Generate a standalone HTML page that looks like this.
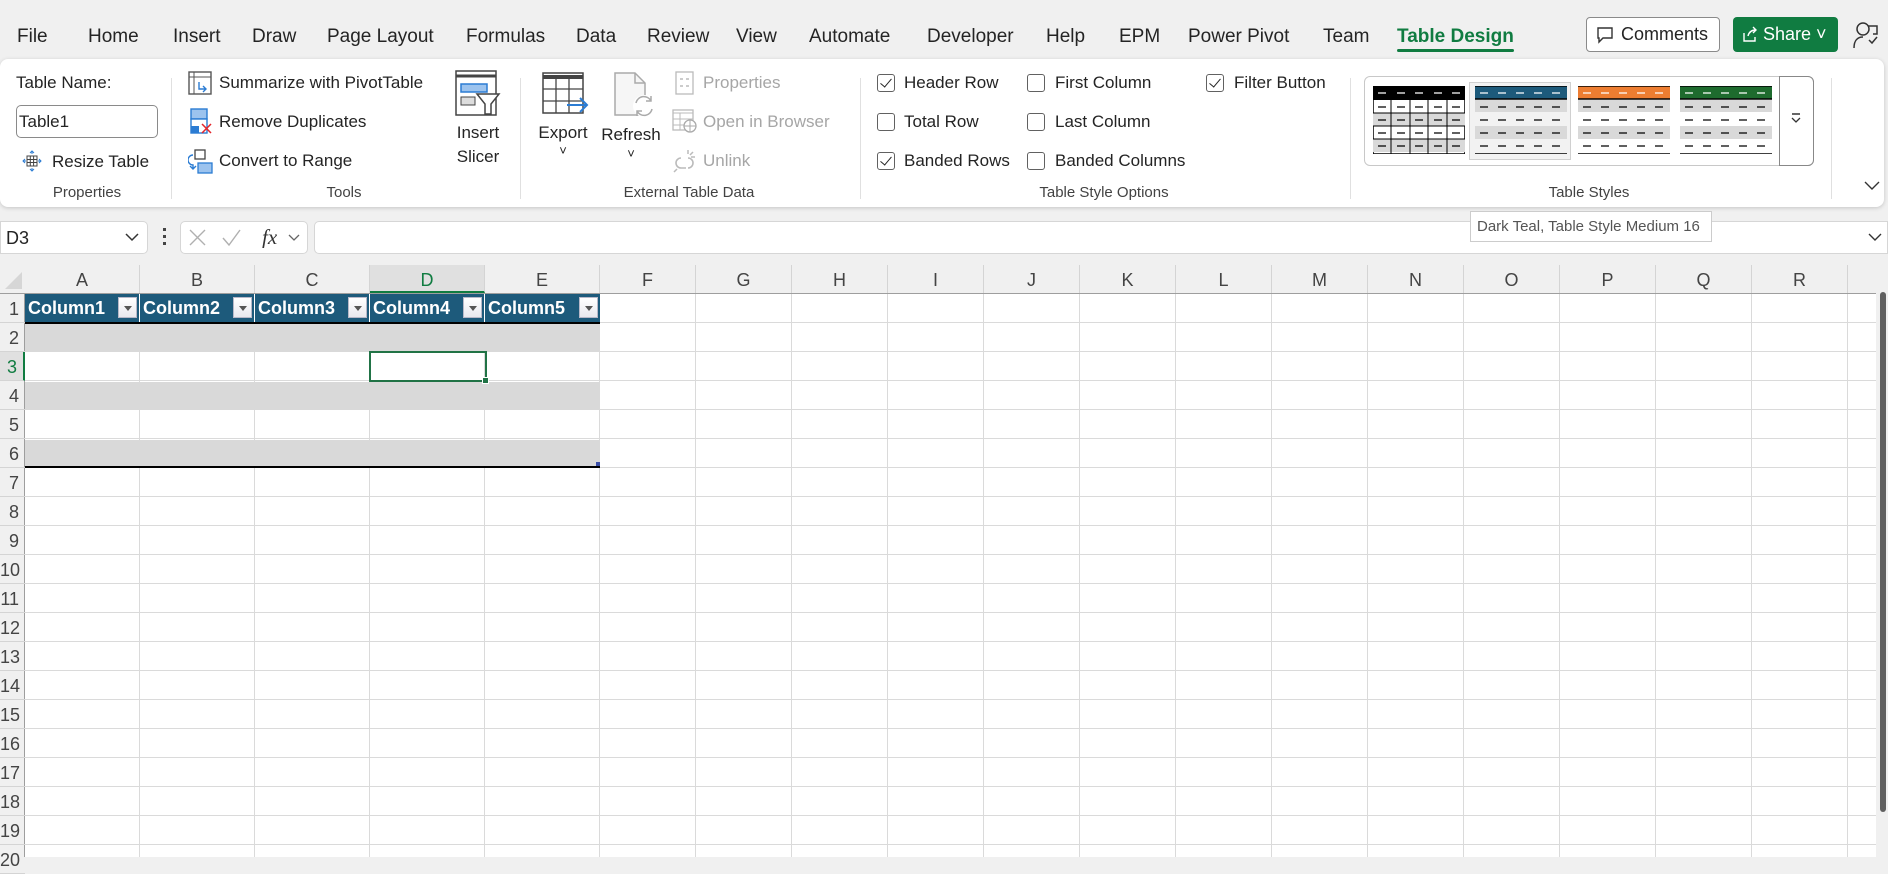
<!DOCTYPE html>
<html><head><meta charset="utf-8"><style>
*{margin:0;padding:0;box-sizing:border-box}
body{width:1888px;height:857px;overflow:hidden;background:#f0f0f0;font-family:"Liberation Sans",sans-serif;color:#242424;position:relative}
.a{position:absolute;white-space:nowrap}
.tab{position:absolute;top:26px;font-size:19px;color:#242424}
.t{position:absolute;font-size:17px;color:#242424;white-space:nowrap}
.g{color:#a6a6a6}
.lbl{position:absolute;top:184px;font-size:15px;color:#424242;transform:translateX(-50%);white-space:nowrap}
.sep{position:absolute;top:78px;width:1px;height:121px;background:#e0e0e0}
.cb{position:absolute;width:18px;height:18px;border:1.5px solid #616161;border-radius:3px;background:#fff}
.cb.on::after{content:"";position:absolute;left:5px;top:1px;width:5px;height:10px;border:solid #242424;border-width:0 1.5px 1.5px 0;transform:rotate(40deg)}
.ch{position:absolute;top:265px;height:28px;font-size:18px;color:#444;text-align:center;line-height:30px;border-right:1px solid #d4d4d4}
.rh{position:absolute;left:0;width:25px;height:29px;font-size:18px;color:#444;text-align:right;line-height:31px;padding-right:6px;border-bottom:1px solid #d4d4d4;overflow:hidden}
.hc{position:absolute;top:294px;height:28px;background:#1d5a7b;color:#fff;font-weight:bold;font-size:18px;line-height:29px;padding-left:3px;border-right:1px solid #fff}
.fb{position:absolute;right:2px;top:3px;width:19px;height:21px;background:linear-gradient(#fff,#e8e8ee);border:1px solid #b8b8c8}
.fb::after{content:"";position:absolute;left:5px;top:8px;border-left:4px solid transparent;border-right:4px solid transparent;border-top:5px solid #555}
.thumb{position:absolute;top:86px;width:92px;height:68px}
</style></head><body>

<div class="tab" style="left:17px">File</div>
<div class="tab" style="left:88px">Home</div>
<div class="tab" style="left:173px">Insert</div>
<div class="tab" style="left:252px">Draw</div>
<div class="tab" style="left:327px">Page Layout</div>
<div class="tab" style="left:466px">Formulas</div>
<div class="tab" style="left:576px">Data</div>
<div class="tab" style="left:647px">Review</div>
<div class="tab" style="left:736px">View</div>
<div class="tab" style="left:809px">Automate</div>
<div class="tab" style="left:927px">Developer</div>
<div class="tab" style="left:1046px">Help</div>
<div class="tab" style="left:1119px">EPM</div>
<div class="tab" style="left:1188px">Power Pivot</div>
<div class="tab" style="left:1323px">Team</div>
<div class="tab" style="left:1397px;color:#107c41;font-weight:bold;font-size:19px">Table Design</div>
<div class="a" style="left:1397px;top:49px;width:117px;height:3px;background:#107c41;border-radius:2px"></div>

<div class="a" style="left:1586px;top:17px;width:134px;height:35px;border:1px solid #8a8a8a;border-radius:4px;background:#fff;font-size:18px;line-height:33px;padding-left:34px">Comments</div>
<svg class="a" style="left:1596px;top:26px" width="18" height="18" viewBox="0 0 18 18"><path d="M2 2h14v10H7l-4 4v-4H2z" fill="none" stroke="#333" stroke-width="1.4"/></svg>
<div class="a" style="left:1733px;top:17px;width:105px;height:35px;border-radius:4px;background:#107c41;color:#fff;font-size:18px;line-height:35px;padding-left:30px">Share ˅</div>
<svg class="a" style="left:1741px;top:25px" width="18" height="18" viewBox="0 0 18 18"><path d="M3 8v8h11v-4M7 11c1-4 4-6 8-6M12 2l3 3-3 3" fill="none" stroke="#fff" stroke-width="1.4"/></svg>
<svg class="a" style="left:1852px;top:20px" width="28" height="30" viewBox="0 0 28 30"><circle cx="11" cy="9" r="6" fill="none" stroke="#333" stroke-width="1.5"/><path d="M2 28c0-8 4-11 9-11M16 6h9v8h-4" fill="none" stroke="#333" stroke-width="1.5"/><path d="M17 20l3 3 5-6" fill="none" stroke="#333" stroke-width="1.5"/></svg>

<div class="a" style="left:0;top:59px;width:1884px;height:148px;background:#fff;border-radius:8px;box-shadow:0 1px 4px rgba(0,0,0,.18)"></div>

<div class="t" style="left:16px;top:73px">Table Name:</div>
<div class="a" style="left:16px;top:105px;width:142px;height:33px;border:1px solid #8a8a8a;border-radius:5px;font-size:17px;line-height:31px;padding-left:2px">Table1</div>
<svg class="a" style="left:22px;top:150px" width="20" height="22" viewBox="0 0 20 22"><rect x="5" y="6" width="10" height="10" fill="none" stroke="#444"/><path d="M5 9.5h10M5 12.5h10M8.3 6v10M11.6 6v10" stroke="#444"/><path d="M10 1v3M8 3l2-2 2 2M10 21v-3M8 19l2 2 2-2M1 11h3M3 9l-2 2 2 2M19 11h-3M17 9l2 2-2 2" stroke="#2b7cd3" fill="none"/></svg>
<div class="t" style="left:52px;top:152px">Resize Table</div>
<div class="lbl" style="left:87px">Properties</div>
<div class="sep" style="left:171px"></div>

<svg class="a" style="left:188px;top:71px" width="24" height="24" viewBox="0 0 24 24"><rect x="1" y="1" width="22" height="22" fill="#fff" stroke="#555" stroke-width="1.4"/><path d="M1 6h22M6 1v22" stroke="#555"/><path d="M11 11v7h7M15 15l3 3-3 3" stroke="#2b7cd3" fill="none" stroke-width="1.4"/></svg>
<div class="t" style="left:219px;top:73px">Summarize with PivotTable</div>
<svg class="a" style="left:190px;top:108px" width="24" height="27" viewBox="0 0 24 27"><rect x="1" y="1" width="16" height="10" fill="#9cc3ee" stroke="#2b7cd3" stroke-width="1.4"/><rect x="1" y="11" width="16" height="14" fill="#fff" stroke="#2b7cd3" stroke-width="1.4"/><rect x="1" y="18" width="8" height="7" fill="#2b7cd3"/><path d="M12 16l9 9M21 16l-9 9" stroke="#e3262c" stroke-width="1.5"/></svg>
<div class="t" style="left:219px;top:112px">Remove Duplicates</div>
<svg class="a" style="left:188px;top:149px" width="26" height="26" viewBox="0 0 26 26"><rect x="7" y="1" width="10" height="9" fill="#fff" stroke="#444" stroke-width="1.3"/><rect x="10" y="14" width="14" height="10" fill="#9cc3ee" stroke="#2b7cd3" stroke-width="1.3"/><path d="M5 6a5 5 0 0 0 0 10v4M2 17l3 3 3-3" stroke="#2b7cd3" fill="none" stroke-width="1.4"/></svg>
<div class="t" style="left:219px;top:151px">Convert to Range</div>

<svg class="a" style="left:455px;top:70px" width="46" height="48" viewBox="0 0 46 48"><rect x="1" y="1" width="40" height="44" fill="#fff" stroke="#444" stroke-width="1.5"/><path d="M1 6h40" stroke="#444" stroke-width="3"/><rect x="6" y="14" width="26" height="8" fill="#9cc3ee" stroke="#2b7cd3" stroke-width="1.5"/><rect x="6" y="27" width="14" height="8" fill="#ddd" stroke="#444"/><path d="M22 24h22l-8 10v10h-6V34z" fill="#fff" stroke="#444" stroke-width="1.5"/></svg>
<div class="t" style="left:478px;top:123px;transform:translateX(-50%)">Insert</div>
<div class="t" style="left:478px;top:147px;transform:translateX(-50%)">Slicer</div>
<div class="lbl" style="left:344px">Tools</div>
<div class="sep" style="left:520px"></div>

<svg class="a" style="left:542px;top:72px" width="48" height="46" viewBox="0 0 48 46"><rect x="1" y="1" width="40" height="40" fill="#fff" stroke="#444" stroke-width="1.5"/><path d="M1 5h40" stroke="#444" stroke-width="4"/><path d="M1 17h40M1 29h40M14 5v36M27 5v36" stroke="#444" stroke-width="1.3"/><path d="M25 33h20M38 26l7 7-7 7" stroke="#2b7cd3" stroke-width="2" fill="none"/></svg>
<div class="t" style="left:563px;top:123px;transform:translateX(-50%)">Export</div>
<div class="t" style="left:563px;top:143px;transform:translateX(-50%);font-size:13px">˅</div>
<svg class="a" style="left:613px;top:72px" width="46" height="48" viewBox="0 0 46 48"><path d="M2 1h20l10 10v32H2z" fill="#f6f6f6" stroke="#aaa" stroke-width="1.5"/><path d="M22 1v10h10" fill="none" stroke="#aaa" stroke-width="1.5"/><circle cx="31" cy="34" r="11" fill="#fff"/><path d="M23 31a8 8 0 0 1 15-2M39 37a8 8 0 0 1-15 2M38 24v5h-5M24 44v-5h5" fill="none" stroke="#aaa" stroke-width="1.5"/></svg>
<div class="t" style="left:631px;top:125px;transform:translateX(-50%)">Refresh</div>
<div class="t" style="left:631px;top:146px;transform:translateX(-50%);font-size:13px">˅</div>

<svg class="a" style="left:675px;top:71px" width="20" height="24" viewBox="0 0 20 24"><rect x="1" y="1" width="17" height="22" fill="#fff" stroke="#bbb" stroke-width="1.3"/><path d="M5 8h3M5 15h3M11 8h3M11 15h3" stroke="#bbb" stroke-width="1.5"/></svg>
<div class="t g" style="left:703px;top:73px">Properties</div>
<svg class="a" style="left:672px;top:109px" width="26" height="24" viewBox="0 0 26 24"><rect x="1" y="1" width="20" height="20" fill="#fff" stroke="#bbb" stroke-width="1.3"/><path d="M1 4h20M1 10h20M1 16h20M8 4v17" stroke="#bbb"/><circle cx="18" cy="17" r="6" fill="#fff" stroke="#aaa" stroke-width="1.3"/><path d="M12 17h12M18 11v12" stroke="#aaa"/></svg>
<div class="t g" style="left:703px;top:112px">Open in Browser</div>
<svg class="a" style="left:672px;top:148px" width="26" height="26" viewBox="0 0 26 26"><path d="M9 10a5 5 0 1 0 0 10h5M16 10a5 5 0 1 1 0 10" fill="none" stroke="#bbb" stroke-width="1.6"/><path d="M16 2v4M21 4l-3 3M23 9h-4M5 21l-3 3" stroke="#bbb" stroke-width="1.5"/></svg>
<div class="t g" style="left:703px;top:151px">Unlink</div>
<div class="lbl" style="left:689px">External Table Data</div>
<div class="sep" style="left:860px"></div>

<div class="cb on" style="left:877px;top:74px"></div><div class="t" style="left:904px;top:73px">Header Row</div>
<div class="cb" style="left:877px;top:113px"></div><div class="t" style="left:904px;top:112px">Total Row</div>
<div class="cb on" style="left:877px;top:152px"></div><div class="t" style="left:904px;top:151px">Banded Rows</div>
<div class="cb" style="left:1027px;top:74px"></div><div class="t" style="left:1055px;top:73px">First Column</div>
<div class="cb" style="left:1027px;top:113px"></div><div class="t" style="left:1055px;top:112px">Last Column</div>
<div class="cb" style="left:1027px;top:152px"></div><div class="t" style="left:1055px;top:151px">Banded Columns</div>
<div class="cb on" style="left:1206px;top:74px"></div><div class="t" style="left:1234px;top:73px">Filter Button</div>
<div class="lbl" style="left:1104px">Table Style Options</div>
<div class="sep" style="left:1350px"></div>

<div class="a" style="left:1364px;top:76px;width:450px;height:90px;border:1px solid #c8c8c8;border-radius:6px;background:#fff"></div>
<div class="a" style="left:1469px;top:82px;width:102px;height:78px;background:#f2f2f2;border:1px solid #d0d0d0"></div>
<svg class="thumb" style="left:1373px" viewBox="0 0 92 68"><rect x="0" y="0" width="92" height="68" fill="#fff" stroke="#000" stroke-width="1.5"/><rect x="0" y="0" width="92" height="14" fill="#000"/><rect x="0" y="27" width="92" height="13" fill="#d9d9d9"/><rect x="0" y="53" width="92" height="13" fill="#d9d9d9"/><path d="M0 40h92M0 53h92M0 27h92M18 14v54M37 14v54M55 14v54M74 14v54" stroke="#000"/><path d="M5 7h8M24 7h8M42 7h8M61 7h8M79 7h8" stroke="#fff" stroke-width="1.3"/><path d="M5 21h8M24 21h8M42 21h8M61 21h8M79 21h8M5 34h8M24 34h8M42 34h8M61 34h8M79 34h8M5 47h8M24 47h8M42 47h8M61 47h8M79 47h8M5 60h8M24 60h8M42 60h8M61 60h8M79 60h8" stroke="#000" stroke-width="1.3"/></svg>
<svg class="thumb" style="left:1475px" viewBox="0 0 92 68"><rect x="0" y="0" width="92" height="13" fill="#1d5a7b"/><path d="M0 0h92M0 13h92M0 68h92" stroke="#000" stroke-width="1.5"/><rect x="0" y="14" width="92" height="12" fill="#d9d9d9"/><rect x="0" y="40" width="92" height="13" fill="#d9d9d9"/><path d="M5 7h8M23 7h8M41 7h8M59 7h8M77 7h8" stroke="#fff" stroke-width="1.3"/><path d="M5 21h8M23 21h8M41 21h8M59 21h8M77 21h8M5 34h8M23 34h8M41 34h8M59 34h8M77 34h8M5 47h8M23 47h8M41 47h8M59 47h8M77 47h8M5 60h8M23 60h8M41 60h8M59 60h8M77 60h8" stroke="#000" stroke-width="1.3"/></svg>
<svg class="thumb" style="left:1578px" viewBox="0 0 92 68"><rect x="0" y="0" width="92" height="13" fill="#ed7d31"/><path d="M0 0h92M0 13h92M0 68h92" stroke="#000" stroke-width="1.5"/><rect x="0" y="14" width="92" height="12" fill="#d9d9d9"/><rect x="0" y="40" width="92" height="13" fill="#d9d9d9"/><path d="M5 7h8M23 7h8M41 7h8M59 7h8M77 7h8" stroke="#fff" stroke-width="1.3"/><path d="M5 21h8M23 21h8M41 21h8M59 21h8M77 21h8M5 34h8M23 34h8M41 34h8M59 34h8M77 34h8M5 47h8M23 47h8M41 47h8M59 47h8M77 47h8M5 60h8M23 60h8M41 60h8M59 60h8M77 60h8" stroke="#000" stroke-width="1.3"/></svg>
<svg class="thumb" style="left:1680px" viewBox="0 0 92 68"><rect x="0" y="0" width="92" height="13" fill="#1e6b2e"/><path d="M0 0h92M0 13h92M0 68h92" stroke="#000" stroke-width="1.5"/><rect x="0" y="14" width="92" height="12" fill="#d9d9d9"/><rect x="0" y="40" width="92" height="13" fill="#d9d9d9"/><path d="M5 7h8M23 7h8M41 7h8M59 7h8M77 7h8" stroke="#fff" stroke-width="1.3"/><path d="M5 21h8M23 21h8M41 21h8M59 21h8M77 21h8M5 34h8M23 34h8M41 34h8M59 34h8M77 34h8M5 47h8M23 47h8M41 47h8M59 47h8M77 47h8M5 60h8M23 60h8M41 60h8M59 60h8M77 60h8" stroke="#000" stroke-width="1.3"/></svg>
<div class="a" style="left:1779px;top:76px;width:35px;height:90px;border:1px solid #888;border-radius:0 6px 6px 0;background:#fff"></div>
<svg class="a" style="left:1790px;top:113px" width="12" height="12" viewBox="0 0 12 12"><path d="M2 1h8" stroke="#333" stroke-width="1.5"/><path d="M2 5l4 4 4-4" stroke="#333" fill="none" stroke-width="1.3"/></svg>
<div class="lbl" style="left:1589px">Table Styles</div>
<div class="sep" style="left:1831px"></div>
<svg class="a" style="left:1864px;top:181px" width="16" height="10" viewBox="0 0 16 10"><path d="M1 1l7 7 7-7" fill="none" stroke="#333" stroke-width="1.4"/></svg>

<div class="a" style="left:0;top:221px;width:148px;height:33px;background:#fff;border:1px solid #d6d6d6;border-radius:0 5px 5px 0;font-size:18px;line-height:32px;padding-left:5px">D3</div>
<svg class="a" style="left:125px;top:233px" width="14" height="9" viewBox="0 0 14 9"><path d="M1 1l6 6 6-6" fill="none" stroke="#333" stroke-width="1.5"/></svg>
<div class="a" style="left:163px;top:228px;width:3px;height:3px;background:#444;box-shadow:0 7px #444,0 14px #444"></div>
<div class="a" style="left:180px;top:221px;width:128px;height:33px;background:#fff;border:1px solid #d6d6d6;border-radius:5px"></div>
<svg class="a" style="left:188px;top:228px" width="118" height="20" viewBox="0 0 118 20"><path d="M2 2l15 15M17 2L2 17" stroke="#b0b0b0" stroke-width="1.4"/><path d="M35 10l6 7 11-15" stroke="#b0b0b0" stroke-width="1.4" fill="none"/><text x="74" y="16" font-family="Liberation Serif" font-style="italic" font-size="21" fill="#333">fx</text><path d="M101 7l5 5 5-5" fill="none" stroke="#666" stroke-width="1.3"/></svg>
<div class="a" style="left:314px;top:221px;width:1574px;height:33px;background:#fff;border:1px solid #d6d6d6;border-radius:5px 0 0 5px"></div>
<svg class="a" style="left:1868px;top:233px" width="14" height="9" viewBox="0 0 14 9"><path d="M1 1l6 6 6-6" fill="none" stroke="#333" stroke-width="1.4"/></svg>

<div class="a" style="left:1470px;top:211px;width:242px;height:31px;background:#fff;border:1px solid #ccc;font-size:15px;color:#555;line-height:29px;padding-left:6px;z-index:5">Dark Teal, Table Style Medium 16</div>

<div class="a" style="left:0;top:264px;width:1888px;height:593px;background:#fff"></div>
<div class="a" style="left:0;top:264px;width:1876px;height:30px;background:#f0f0f0;border-bottom:1px solid #9e9e9e"></div>
<svg class="a" style="left:3px;top:270px" width="20" height="20"><path d="M19 2V19H2z" fill="#d6d6d6"/></svg>
<div class="a" style="left:0;top:294px;width:25px;height:563px;background:#f0f0f0;border-right:1px solid #9e9e9e"></div>
<div class="a" style="left:25px;top:294px;width:575px;height:563px;background-image:linear-gradient(90deg,transparent 114px,#dadada 114px);background-size:115px 29px"></div>
<div class="a" style="left:600px;top:294px;width:1249px;height:563px;background-image:linear-gradient(90deg,transparent 95px,#dadada 95px);background-size:96px 29px"></div>
<div class="a" style="left:25px;top:294px;width:1851px;height:563px;background-image:linear-gradient(transparent 28px,#dadada 28px);background-size:29px 29px"></div>
<div class="a" style="left:1876px;top:264px;width:12px;height:593px;background:#f0f0f0"></div>
<div class="a" style="left:1880px;top:292px;width:6px;height:520px;background:#606060;border-radius:3px"></div>

<div class="ch" style="left:25px;width:115px">A</div>
<div class="ch" style="left:140px;width:115px">B</div>
<div class="ch" style="left:255px;width:115px">C</div>
<div class="ch" style="left:370px;width:115px;background:#e0e0e0;color:#107c41;border-bottom:2px solid #107c41">D</div>
<div class="ch" style="left:485px;width:115px">E</div>
<div class="ch" style="left:600px;width:96px">F</div>
<div class="ch" style="left:696px;width:96px">G</div>
<div class="ch" style="left:792px;width:96px">H</div>
<div class="ch" style="left:888px;width:96px">I</div>
<div class="ch" style="left:984px;width:96px">J</div>
<div class="ch" style="left:1080px;width:96px">K</div>
<div class="ch" style="left:1176px;width:96px">L</div>
<div class="ch" style="left:1272px;width:96px">M</div>
<div class="ch" style="left:1368px;width:96px">N</div>
<div class="ch" style="left:1464px;width:96px">O</div>
<div class="ch" style="left:1560px;width:96px">P</div>
<div class="ch" style="left:1656px;width:96px">Q</div>
<div class="ch" style="left:1752px;width:96px">R</div>

<div class="rh" style="top:294px">1</div>
<div class="rh" style="top:323px">2</div>
<div class="rh" style="top:352px;background:#e0e0e0;color:#107c41;border-right:2px solid #107c41">3</div>
<div class="rh" style="top:381px">4</div>
<div class="rh" style="top:410px">5</div>
<div class="rh" style="top:439px">6</div>
<div class="rh" style="top:468px">7</div>
<div class="rh" style="top:497px">8</div>
<div class="rh" style="top:526px">9</div>
<div class="rh" style="top:555px">10</div>
<div class="rh" style="top:584px">11</div>
<div class="rh" style="top:613px">12</div>
<div class="rh" style="top:642px">13</div>
<div class="rh" style="top:671px">14</div>
<div class="rh" style="top:700px">15</div>
<div class="rh" style="top:729px">16</div>
<div class="rh" style="top:758px">17</div>
<div class="rh" style="top:787px">18</div>
<div class="rh" style="top:816px">19</div>
<div class="rh" style="top:845px">20</div>

<div class="a" style="left:25px;top:322px;width:575px;height:2px;background:#000"></div>
<div class="a" style="left:25px;top:324px;width:575px;height:28px;background:#d9d9d9"></div>
<div class="a" style="left:25px;top:382px;width:575px;height:28px;background:#d9d9d9"></div>
<div class="a" style="left:25px;top:440px;width:575px;height:27px;background:#d9d9d9"></div>
<div class="a" style="left:25px;top:466px;width:575px;height:2px;background:#000"></div>
<div class="a" style="left:596px;top:462px;width:4px;height:4px;background:#3b4fa8"></div>
<div class="hc" style="left:25px;width:115px">Column1<div class="fb"></div></div>
<div class="hc" style="left:140px;width:115px">Column2<div class="fb"></div></div>
<div class="hc" style="left:255px;width:115px">Column3<div class="fb"></div></div>
<div class="hc" style="left:370px;width:115px">Column4<div class="fb"></div></div>
<div class="hc" style="left:485px;width:115px;border-right:none">Column5<div class="fb"></div></div>

<div class="a" style="left:369px;top:351px;width:118px;height:31px;border:2px solid #217346"></div>
<div class="a" style="left:482px;top:377px;width:7px;height:7px;background:#217346;border:1px solid #fff"></div>
</body></html>
